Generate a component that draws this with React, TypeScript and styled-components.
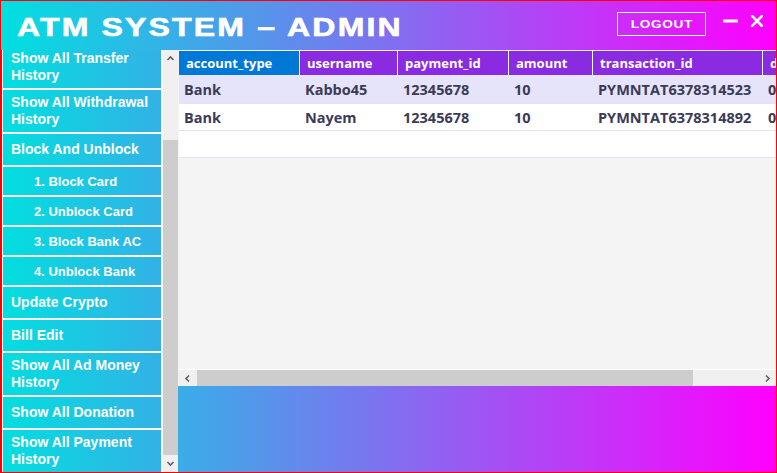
import React from "react";
import styled, { createGlobalStyle } from "styled-components";

const GlobalStyle = createGlobalStyle`
  html, body {
    margin: 0;
    padding: 0;
    background: #ffffff;
  }
  * {
    box-sizing: border-box;
  }
`;

interface IColumn {
  key: string;
  title: string;
  width: number;
}

const columns: IColumn[] = [
  { key: "account_type", title: "account_type", width: 121 },
  { key: "username", title: "username", width: 98 },
  { key: "payment_id", title: "payment_id", width: 111 },
  { key: "amount", title: "amount", width: 84 },
  { key: "transaction_id", title: "transaction_id", width: 170 },
  { key: "date", title: "date", width: 120 },
];

const rows: Record<string, string>[] = [
  {
    account_type: "Bank",
    username: "Kabbo45",
    payment_id: "12345678",
    amount: "10",
    transaction_id: "PYMNTAT6378314523",
    date: "05-01-2023",
  },
  {
    account_type: "Bank",
    username: "Nayem",
    payment_id: "12345678",
    amount: "10",
    transaction_id: "PYMNTAT6378314892",
    date: "06-01-2023",
  },
];

type MenuKind = "main" | "sub";

const menu: { label: string; kind: MenuKind; lines: number }[] = [
  { label: "Show All Transfer History", kind: "main", lines: 2 },
  { label: "Show All Withdrawal History", kind: "main", lines: 2 },
  { label: "Block And Unblock", kind: "main", lines: 1 },
  { label: "1. Block Card", kind: "sub", lines: 1 },
  { label: "2. Unblock Card", kind: "sub", lines: 1 },
  { label: "3. Block Bank AC", kind: "sub", lines: 1 },
  { label: "4. Unblock Bank", kind: "sub", lines: 1 },
  { label: "Update Crypto", kind: "main", lines: 1 },
  { label: "Bill Edit", kind: "main", lines: 1 },
  { label: "Show All Ad Money History", kind: "main", lines: 2 },
  { label: "Show All Donation", kind: "main", lines: 1 },
  { label: "Show All Payment History", kind: "main", lines: 2 },
];

const Chevron: React.FC<{ dir: "up" | "down" | "left" | "right" }> = ({
  dir,
}) => {
  const rot = { up: 0, right: 90, down: 180, left: 270 }[dir];
  return (
    <svg width="9" height="9" viewBox="0 0 9 9">
      <polyline
        points="1.5,6 4.5,3 7.5,6"
        fill="none"
        stroke="#606060"
        strokeWidth="1.6"
        transform={`rotate(${rot} 4.5 4.5)`}
      />
    </svg>
  );
};

const App: React.FC = () => {
  return (
    <>
      <GlobalStyle />
      <Frame>
        <Header>
          <Title>ATM SYSTEM – ADMIN</Title>
          <LogoutButton>
            <span>LOGOUT</span>
          </LogoutButton>
          <WindowButtons>
            <svg width="15" height="12" viewBox="0 0 15 12">
              <rect x="0" y="4.5" width="15" height="3" fill="#ffffff" />
            </svg>
            <svg width="12" height="12" viewBox="0 0 12 12">
              <path
                d="M1 1 L11 11 M11 1 L1 11"
                stroke="#ffffff"
                strokeWidth="2.6"
                strokeLinecap="square"
              />
            </svg>
          </WindowButtons>
        </Header>

        <Sidebar>
          <MenuViewport>
            <MenuList>
              {menu.map((m) => (
                <MenuButton key={m.label} $kind={m.kind} $lines={m.lines}>
                  <span>{m.label}</span>
                </MenuButton>
              ))}
            </MenuList>
          </MenuViewport>
          <VScroll>
            <ScrollArrow $vertical>
              <Chevron dir="up" />
            </ScrollArrow>
            <VTrack>
              <VThumb />
            </VTrack>
            <ScrollArrow $vertical>
              <Chevron dir="down" />
            </ScrollArrow>
          </VScroll>
        </Sidebar>

        <Main>
          <GridPanel>
            <GridArea>
              <HeadRow>
                {columns.map((c, i) => (
                  <HeadCell key={c.key} $w={c.width} $active={i === 0}>
                    {c.title}
                  </HeadCell>
                ))}
              </HeadRow>
              {rows.map((r, i) => (
                <DataRow key={i} $selected={i === 0}>
                  {columns.map((c) => (
                    <DataCell key={c.key} $w={c.width}>
                      {r[c.key]}
                    </DataCell>
                  ))}
                </DataRow>
              ))}
              <DataRow $selected={false} />
            </GridArea>
            <HScroll>
              <ScrollArrow>
                <Chevron dir="left" />
              </ScrollArrow>
              <HTrack>
                <HThumb />
              </HTrack>
              <ScrollArrow>
                <Chevron dir="right" />
              </ScrollArrow>
            </HScroll>
          </GridPanel>
        </Main>
      </Frame>
    </>
  );
};

export default App;

const Frame = styled.div`
  width: 777px;
  height: 473px;
  border: 1px solid #ff0000;
  background: linear-gradient(to right, #00e0e0, #ff00ff);
  display: grid;
  grid-template-rows: 49px minmax(0, 1fr);
  grid-template-columns: 177px minmax(0, 1fr);
  overflow: hidden;
`;

const Header = styled.div`
  grid-column: 1 / -1;
  display: flex;
  align-items: center;
  padding: 0 13px 0 16px;
  min-width: 0;
`;

const Title = styled.div`
  color: #ffffff;
  font-family: "Liberation Sans", Arial, sans-serif;
  font-weight: 700;
  font-size: 25px;
  letter-spacing: 1.7px;
  white-space: nowrap;
  transform: scaleX(1.28);
  transform-origin: left center;
  margin-top: 3px;
  -webkit-text-stroke: 0.6px #ffffff;
`;

const LogoutButton = styled.div`
  margin-left: auto;
  flex: none;
  width: 89px;
  height: 24px;
  border: 1px solid #ffffff;
  display: flex;
  align-items: center;
  justify-content: center;
  color: #ffffff;
  font-family: "Liberation Sans", Arial, sans-serif;
  font-weight: 700;
  font-size: 10.5px;
  letter-spacing: 0.5px;
  margin-top: -3px;

  span {
    display: inline-block;
    transform: scaleX(1.3);
  }
`;

const WindowButtons = styled.div`
  flex: none;
  align-self: flex-start;
  margin-top: 14px;
  margin-left: 17px;
  display: flex;
  align-items: center;
  gap: 13px;
`;

const Sidebar = styled.div`
  display: flex;
  gap: 2px;
  background: #ffffff;
  border-left: 1px solid #ff0000;
  padding-left: 1px;
  min-height: 0;
`;

const MenuViewport = styled.div`
  width: 158px;
  overflow: hidden;
`;

const MenuList = styled.div`
  display: flex;
  flex-direction: column;
  gap: 2px;
  margin-top: -4px;
`;

const MenuButton = styled.div<{ $kind: MenuKind; $lines: number }>`
  flex: none;
  height: ${(p) => (p.$kind === "sub" ? 28 : p.$lines === 2 ? 42 : 31)}px;
  display: flex;
  align-items: center;
  padding-left: ${(p) => (p.$kind === "sub" ? 31 : 8)}px;
  padding-right: 6px;
  background: linear-gradient(to right, #03dedf, #33b1e6);
  color: #ffffff;
  font-family: "Liberation Sans", Arial, sans-serif;
  font-weight: 700;
  font-size: ${(p) => (p.$kind === "sub" ? 13 : 14)}px;
  line-height: 17px;
`;

const VScroll = styled.div`
  width: 15px;
  display: flex;
  flex-direction: column;
  background: #f0f0f0;
`;

const ScrollArrow = styled.div<{ $vertical?: boolean }>`
  flex: none;
  width: ${(p) => (p.$vertical ? "15px" : "17px")};
  height: ${(p) => (p.$vertical ? "17px" : "100%")};
  display: flex;
  align-items: center;
  justify-content: center;
  background: #f0f0f0;
`;

const VTrack = styled.div`
  flex: 1;
  display: flex;
  flex-direction: column;
  padding-top: 73px;
`;

const VThumb = styled.div`
  flex: 1;
  background: #cdcdcd;
`;

const Main = styled.div`
  display: flex;
  flex-direction: column;
  min-width: 0;
`;

const GridPanel = styled.div`
  height: 336px;
  display: flex;
  flex-direction: column;
  background: #f4f4f4;
  padding: 1px 0 0 1px;
`;

const GridArea = styled.div`
  flex: 1;
  overflow: hidden;
  font-family: "Open Sans", "Noto Sans", sans-serif;
  font-weight: 700;
`;

const HeadRow = styled.div`
  display: flex;
  height: 24px;
`;

const HeadCell = styled.div<{ $w: number; $active: boolean }>`
  flex: none;
  width: ${(p) => p.$w}px;
  height: 100%;
  background: ${(p) => (p.$active ? "#0078d7" : "#8a2be2")};
  border-right: 1px solid #ffffff;
  color: #ffffff;
  font-size: 13px;
  display: flex;
  align-items: center;
  padding-left: 7px;
  white-space: nowrap;
  overflow: hidden;
`;

const DataRow = styled.div<{ $selected: boolean }>`
  display: flex;
  height: ${(p) => (p.$selected ? 29 : 27)}px;
  background: ${(p) => (p.$selected ? "#e6e4fb" : "#ffffff")};
  border-bottom: 1px solid #e4e2fa;
`;

const DataCell = styled.div<{ $w: number }>`
  flex: none;
  width: ${(p) => p.$w}px;
  display: flex;
  align-items: center;
  padding-left: 5px;
  color: #3b3b58;
  font-size: 14.5px;
  white-space: nowrap;
  overflow: hidden;
`;

const HScroll = styled.div`
  flex: none;
  height: 17px;
  display: flex;
  background: #f0f0f0;
  border-top: 1px solid #ffffff;
`;

const HTrack = styled.div`
  flex: 1;
  padding-left: 1px;
  display: flex;
`;

const HThumb = styled.div`
  width: 496px;
  background: #cdcdcd;
`;
